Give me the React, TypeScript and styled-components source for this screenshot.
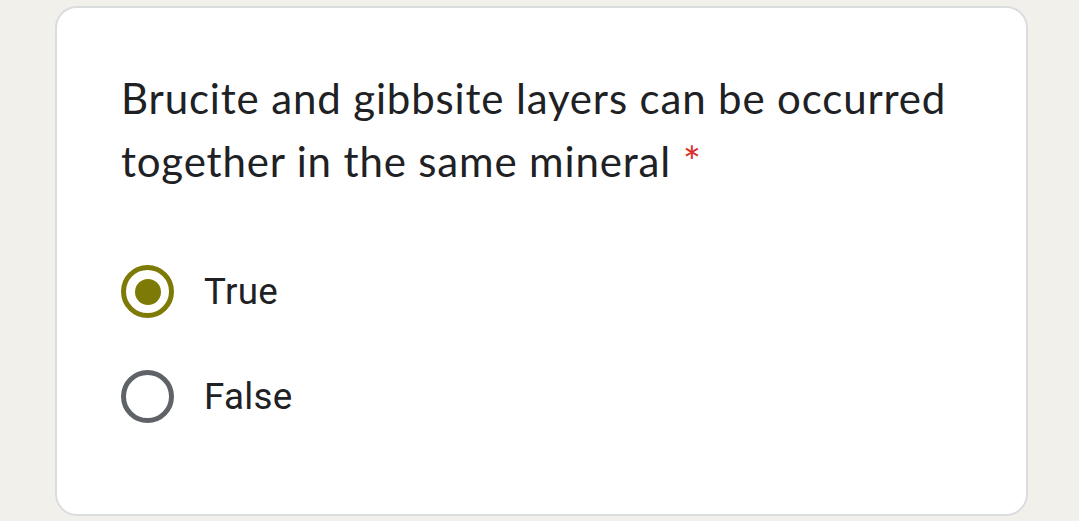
import React from "react";
import styled, { createGlobalStyle } from "styled-components";

const Global = createGlobalStyle`
  html, body { margin: 0; padding: 0; background: #f1f0ea; }
  body { width: 1079px; height: 521px; overflow: hidden; }
`;

const Page = styled.div`
  padding: 6px 0 0 55px;
  box-sizing: border-box;
  width: 1079px;
  height: 521px;
`;

const Card = styled.div`
  box-sizing: border-box;
  width: 973px;
  height: 510px;
  background: #ffffff;
  border: 2px solid #dadce0;
  border-radius: 22px;
  padding: 59px 64px 0 64px;
`;

const Question = styled.div`
  font-family: Lato, "Open Sans", "Liberation Sans", sans-serif;
  font-size: 42px;
  line-height: 63px;
  letter-spacing: 0.85px;
  color: #202124;
  max-width: 840px;
`;

const Required = styled.span`
  color: #d93025;
  margin-left: 12px;
`;

const Options = styled.div`
  display: flex;
  flex-direction: column;
  gap: 52px;
  margin-top: 72px;
`;

const Option = styled.label`
  display: flex;
  align-items: center;
  gap: 30px;
  height: 53px;
`;

const Radio = styled.span<{ $checked?: boolean }>`
  box-sizing: border-box;
  width: 53px;
  height: 53px;
  border-radius: 50%;
  border: 5px solid ${(p) => (p.$checked ? "#7d7a05" : "#5f6368")};
  display: flex;
  align-items: center;
  justify-content: center;
  flex-shrink: 0;
  &::after {
    content: "";
    display: ${(p) => (p.$checked ? "block" : "none")};
    width: 26px;
    height: 26px;
    border-radius: 50%;
    background: #7d7a05;
  }
`;

const Label = styled.span`
  font-family: Roboto, "Liberation Sans", sans-serif;
  font-size: 36.75px;
  color: #202124;
  letter-spacing: 0.3px;
`;

export default function App() {
  return (
    <>
      <Global />
      <Page>
        <Card>
          <Question>
            Brucite and gibbsite layers can be occurred together in the same mineral
            <Required>*</Required>
          </Question>
          <Options>
            <Option>
              <Radio $checked />
              <Label>True</Label>
            </Option>
            <Option>
              <Radio />
              <Label>False</Label>
            </Option>
          </Options>
        </Card>
      </Page>
    </>
  );
}
